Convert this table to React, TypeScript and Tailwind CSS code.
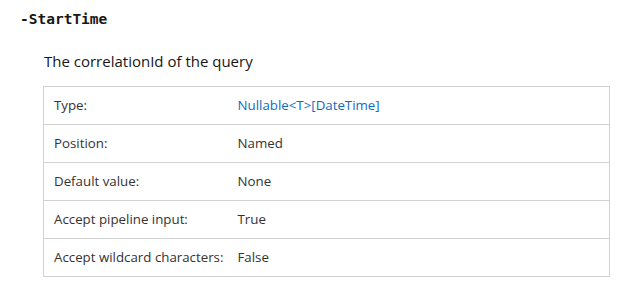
const rows: { label: string; value: React.ReactNode }[] = [
  {
    label: 'Type:',
    value: (
      <span className="text-[#0f6cbd]">
        <a>Nullable&lt;T&gt;</a>[<a>DateTime</a>]
      </span>
    ),
  },
  { label: 'Position:', value: 'Named' },
  { label: 'Default value:', value: 'None' },
  { label: 'Accept pipeline input:', value: 'True' },
  { label: 'Accept wildcard characters:', value: 'False' },
];

export default function App() {
  return (
    <div className="w-[638px] h-[295px] bg-white font-['Open_Sans',sans-serif] text-[#171717]">
      <div className="pt-[10px] pl-[20px]">
        <h4 className="font-['DejaVu_Sans_Mono',monospace] font-bold text-[14.5px] leading-[18px]">-StartTime</h4>
      </div>
      <div className="pl-[43px] pr-[29px]">
        <p className="mt-[22px] mb-[14px] text-[15px] leading-[22px] pl-[1px]">The correlationId of the query</p>
        <table className="w-[567px] border-collapse border border-[#d2d2d2] text-[13.3px] text-[#333]">
          <tbody>
            {rows.map((r) => (
              <tr key={r.label} className="h-[38px] border-b border-[#d2d2d2]">
                <td className="w-[194px] pl-[10px] align-middle">{r.label}</td>
                <td className="align-middle">{r.value}</td>
              </tr>
            ))}
          </tbody>
        </table>
      </div>
    </div>
  );
}
